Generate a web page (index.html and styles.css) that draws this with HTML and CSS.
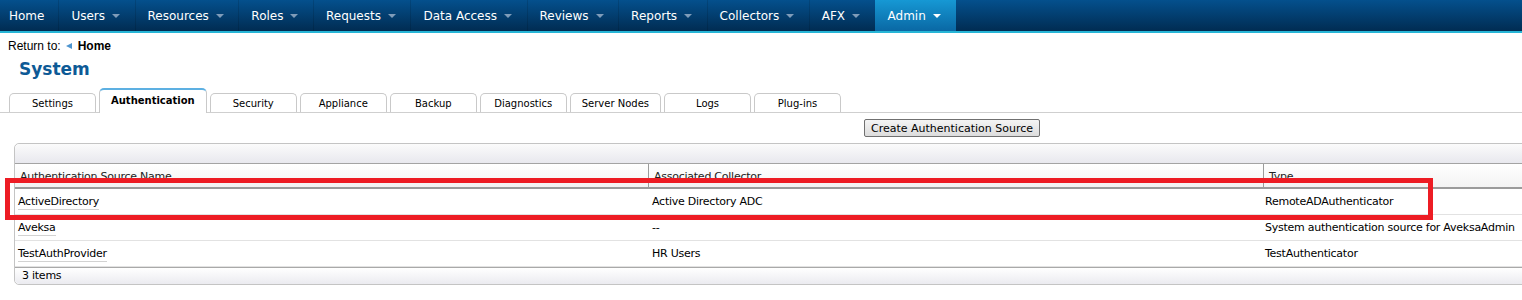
FILE: index.html
```html
<!DOCTYPE html>
<html>
<head>
    <title>System - Authentication</title>
    <link rel="stylesheet" href="styles.css">
</head>
<body>
    <nav class="topnav">
        <ul class="menu">
            <li class="menu-item menu-home">Home</li>
            <li class="menu-item">Users<span class="caret"></span></li>
            <li class="menu-item">Resources<span class="caret"></span></li>
            <li class="menu-item">Roles<span class="caret"></span></li>
            <li class="menu-item">Requests<span class="caret"></span></li>
            <li class="menu-item">Data Access<span class="caret"></span></li>
            <li class="menu-item">Reviews<span class="caret"></span></li>
            <li class="menu-item">Reports<span class="caret"></span></li>
            <li class="menu-item">Collectors<span class="caret"></span></li>
            <li class="menu-item">AFX<span class="caret"></span></li>
            <li class="menu-item active">Admin<span class="caret"></span></li>
        </ul>
    </nav>

    <div class="return-to">
        Return to:
        <span class="back-arrow"></span>
        <a class="return-link">Home</a>
    </div>

    <h1 class="page-title">System</h1>

    <div class="tabs">
        <div class="tab">Settings</div>
        <div class="tab selected">Authentication</div>
        <div class="tab">Security</div>
        <div class="tab">Appliance</div>
        <div class="tab">Backup</div>
        <div class="tab">Diagnostics</div>
        <div class="tab">Server Nodes</div>
        <div class="tab">Logs</div>
        <div class="tab">Plug-ins</div>
    </div>

    <div class="actions">
        <button class="button">Create Authentication Source</button>
    </div>

    <div class="grid">
        <div class="grid-band"></div>
        <div class="grid-head">
            <div class="cell col-name">Authentication Source Name</div>
            <div class="cell col-collector">Associated Collector</div>
            <div class="cell col-type">Type</div>
        </div>
        <div class="grid-row">
            <div class="cell col-name"><span class="link">ActiveDirectory</span></div>
            <div class="cell col-collector">Active Directory ADC</div>
            <div class="cell col-type">RemoteADAuthenticator</div>
        </div>
        <div class="grid-row">
            <div class="cell col-name"><span class="link">Aveksa</span></div>
            <div class="cell col-collector">--</div>
            <div class="cell col-type">System authentication source for AveksaAdmin</div>
        </div>
        <div class="grid-row">
            <div class="cell col-name"><span class="link">TestAuthProvider</span></div>
            <div class="cell col-collector">HR Users</div>
            <div class="cell col-type">TestAuthenticator</div>
        </div>
        <div class="grid-foot">3 items</div>
    </div>

    <div class="highlight-box"></div>
</body>
</html>
```

FILE: styles.css
```css
* {
    box-sizing: border-box;
    margin: 0;
    padding: 0;
}

body {
    margin: 0;
    font-family: "DejaVu Sans", sans-serif;
    color: #000000;
    background-color: #ffffff;
    overflow: hidden;
    position: relative;
    min-height: 300px;
}

/* top navigation */
.topnav {
    height: 33px;
    background: linear-gradient(#04508d, #012c52);
    border-bottom: 2px solid #27b5d6;
}

.menu {
    list-style: none;
    display: flex;
    height: 31px;
}

.menu-item {
    display: flex;
    align-items: center;
    padding: 0 14.5px 0 12px;
    color: #ffffff;
    font-size: 12px;
    border-left: 1px solid rgba(0, 0, 0, 0.12);
    white-space: nowrap;
}

.menu-home {
    padding: 0 14px 0 9px;
    border-left: none;
}

.menu-item.active {
    padding-right: 15px;
    background: linear-gradient(#1698d4, #0a68a4);
    border-left-color: transparent;
}

.caret {
    display: inline-block;
    margin-left: 7px;
    margin-top: 1px;
    border-left: 4px solid transparent;
    border-right: 4px solid transparent;
    border-top: 4px solid #7f9cb9;
}

.menu-item.active .caret {
    border-top-color: #ffffff;
}

/* return link */
.return-to {
    display: flex;
    align-items: center;
    margin: 6px 0 0 8px;
    height: 14px;
    font-family: "Liberation Sans", Arial, sans-serif;
    font-size: 12px;
}

.back-arrow {
    display: inline-block;
    margin: 0 6px 0 5px;
    border-top: 3px solid transparent;
    border-bottom: 3px solid transparent;
    border-right: 6px solid #4e95cf;
}

.return-link {
    font-weight: bold;
    color: #000000;
}

.page-title {
    margin: 5px 0 0 19px;
    height: 22px;
    line-height: 22px;
    font-size: 17px;
    font-weight: bold;
    color: #0d5a96;
}

/* tabs */
.tabs {
    display: flex;
    align-items: flex-end;
    gap: 3px;
    padding: 8px 0 0 9px;
    border-bottom: 1px solid #cfcfcf;
    height: 33px;
}

.tab {
    min-width: 87px;
    height: 19px;
    padding: 0 11px;
    border: 1px solid #c9c9c9;
    border-bottom: none;
    border-radius: 5px 5px 0 0;
    background: #ffffff;
    font-size: 10px;
    line-height: 19px;
    text-align: center;
    color: #000000;
}

.tab.selected {
    height: 25px;
    margin-bottom: -1px;
    padding: 0 11px;
    border-top: 2px solid #5db0e2;
    font-weight: bold;
    line-height: 21px;
}

/* action bar */
.actions {
    display: flex;
    justify-content: flex-end;
    width: 1040px;
    margin-top: 6px;
}

.button {
    height: 18px;
    width: 176px;
    padding: 0;
    white-space: nowrap;
    font-family: "DejaVu Sans", sans-serif;
    font-size: 11px;
    line-height: 15px;
    color: #000000;
    border: 1px solid #707070;
    border-radius: 2px;
    background: linear-gradient(#f4f4f4, #dcdcdc);
}

/* grid */
.grid {
    margin: 6px 0 0 14px;
    width: 1540px;
    border: 1px solid #c4c4c4;
    border-radius: 5px 0 0 5px;
    font-size: 11px;
    letter-spacing: -0.25px;
}

.grid-band {
    height: 19px;
    background: linear-gradient(#fbfbfb, #e8e8ee);
    border-radius: 5px 0 0 0;
}

.grid-head,
.grid-row {
    display: flex;
}

.grid-head {
    height: 26px;
    border-top: 1px solid #a3a3a3;
    border-bottom: 2px solid #9b9b9b;
    background: linear-gradient(#ffffff, #f3f3f3);
}

.grid-head .cell {
    padding: 6px 0 0 5px;
    line-height: 14px;
    color: #222222;
}

.grid-head .col-name,
.grid-head .col-collector {
    border-right: 1px solid #9b9b9b;
}

.grid-row {
    height: 26px;
    border-bottom: 1px solid #e2e2e2;
    align-items: center;
}

.grid-row .cell {
    padding-left: 3px;
}

.grid-row .col-type {
    padding-left: 1px;
}

.cell {
    white-space: nowrap;
}

.col-name {
    width: 634px;
}

.col-collector {
    width: 615px;
}

.col-type {
    flex: 1;
}

.link {
    border-bottom: 1px solid #d2d2d2;
    padding-bottom: 1px;
}

.grid-foot {
    height: 17px;
    padding-left: 7px;
    line-height: 15px;
    border-top: 1px solid #a9a9a9;
    background: linear-gradient(#ffffff, #ebebf0);
    border-radius: 0 0 0 5px;
}

/* red annotation rectangle drawn over the first row */
.highlight-box {
    position: absolute;
    left: 5px;
    top: 178px;
    width: 1428px;
    height: 42px;
    border: 5px solid #ed1c24;
}
```
